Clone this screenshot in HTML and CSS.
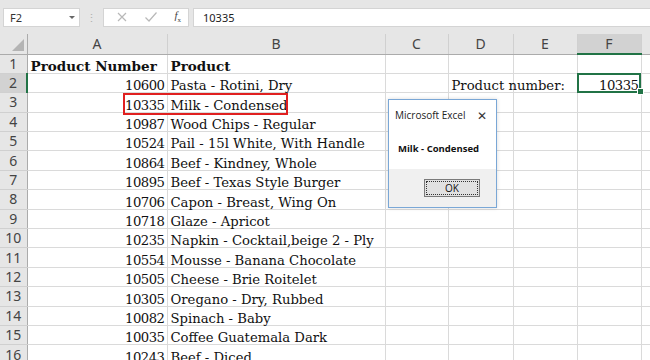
FILE: index.html
```html
<!DOCTYPE html>
<html lang="en">
<head>
    <meta charset="UTF-8">
    <title>Excel - Product lookup</title>
    <link rel="stylesheet" href="styles.css">
</head>
<body>
    <div class="toolbar">
        <div class="name-box">
            <span>F2</span>
            <span class="caret"></span>
        </div>
        <div class="grip">⋮</div>
        <div class="fx-buttons">
            <svg width="12" height="12" viewBox="0 0 12 12"><path d="M2 2 L10 10 M10 2 L2 10" stroke="#b8b8b8" stroke-width="1.2" fill="none"/></svg>
            <svg width="14" height="12" viewBox="0 0 14 12"><path d="M1.5 6.5 L5 10 L12.5 1.5" stroke="#b8b8b8" stroke-width="1.2" fill="none"/></svg>
            <span class="fx"><i>f</i><sub>x</sub></span>
        </div>
        <div class="formula">10335</div>
    </div>

    <div class="sheet">
        <table class="grid">
            <colgroup>
                <col class="c-rh">
                <col class="c-a">
                <col class="c-b">
                <col class="c-c">
                <col class="c-d">
                <col class="c-e">
                <col class="c-f">
                <col>
            </colgroup>
            <tr class="col-heads">
                <th class="corner"><span class="tri"></span></th>
                <th>A</th><th>B</th><th>C</th><th>D</th><th>E</th><th class="active">F</th><th></th>
            </tr>
            <tr><th>1</th><td class="num bold">Product Number</td><td class="bold">Product</td><td></td><td></td><td></td><td></td><td></td></tr>
            <tr><th class="active">2</th><td class="num">10600</td><td>Pasta - Rotini, Dry</td><td></td><td class="label">Product number:</td><td></td><td class="num selected">10335<span class="handle"></span></td><td></td></tr>
            <tr><th>3</th><td class="num">10335</td><td>Milk - Condensed</td><td></td><td></td><td></td><td></td><td></td></tr>
            <tr><th>4</th><td class="num">10987</td><td>Wood Chips - Regular</td><td></td><td></td><td></td><td></td><td></td></tr>
            <tr><th>5</th><td class="num">10524</td><td>Pail - 15l White, With Handle</td><td></td><td></td><td></td><td></td><td></td></tr>
            <tr><th>6</th><td class="num">10864</td><td>Beef - Kindney, Whole</td><td></td><td></td><td></td><td></td><td></td></tr>
            <tr><th>7</th><td class="num">10895</td><td>Beef - Texas Style Burger</td><td></td><td></td><td></td><td></td><td></td></tr>
            <tr><th>8</th><td class="num">10706</td><td>Capon - Breast, Wing On</td><td></td><td></td><td></td><td></td><td></td></tr>
            <tr><th>9</th><td class="num">10718</td><td>Glaze - Apricot</td><td></td><td></td><td></td><td></td><td></td></tr>
            <tr><th>10</th><td class="num">10235</td><td>Napkin - Cocktail,beige 2 - Ply</td><td></td><td></td><td></td><td></td><td></td></tr>
            <tr><th>11</th><td class="num">10554</td><td>Mousse - Banana Chocolate</td><td></td><td></td><td></td><td></td><td></td></tr>
            <tr><th>12</th><td class="num">10505</td><td>Cheese - Brie Roitelet</td><td></td><td></td><td></td><td></td><td></td></tr>
            <tr><th>13</th><td class="num">10305</td><td>Oregano - Dry, Rubbed</td><td></td><td></td><td></td><td></td><td></td></tr>
            <tr><th>14</th><td class="num">10082</td><td>Spinach - Baby</td><td></td><td></td><td></td><td></td><td></td></tr>
            <tr><th>15</th><td class="num">10035</td><td>Coffee Guatemala Dark</td><td></td><td></td><td></td><td></td><td></td></tr>
            <tr><th>16</th><td class="num">10243</td><td>Beef - Diced</td><td></td><td></td><td></td><td></td><td></td></tr>
        </table>

        <!-- highlight drawn over A3:B3 -->
        <div class="found-box"></div>

        <div class="msgbox">
            <div class="msg-title">
                <span>Microsoft Excel</span>
                <span class="msg-close">✕</span>
            </div>
            <div class="msg-body">Milk - Condensed</div>
            <div class="msg-foot">
                <button class="ok">OK</button>
            </div>
        </div>
    </div>
</body>
</html>
```

FILE: styles.css
```css
body {
    margin: 0;
    width: 650px;
    height: 360px;
    overflow: hidden;
    background-color: #fff;
    font-family: "Noto Sans", "Open Sans", sans-serif;
}

.toolbar {
    height: 34px;
    background-color: #e6e6e6;
    display: flex;
    align-items: center;
    padding-left: 3px;
    box-sizing: border-box;
}

.name-box {
    width: 77px;
    height: 19px;
    background-color: #fff;
    border: 1px solid #d4d4d4;
    box-sizing: border-box;
    display: flex;
    align-items: center;
    justify-content: space-between;
    padding: 0 4px 0 6px;
    font-size: 11px;
    color: #333;
}

.caret {
    width: 0;
    height: 0;
    border-left: 3px solid transparent;
    border-right: 3px solid transparent;
    border-top: 3px solid #666;
}

.grip {
    width: 23px;
    text-align: center;
    color: #b0b0b0;
    font-size: 11px;
}

.fx-buttons {
    width: 86px;
    height: 19px;
    background-color: #fff;
    border: 1px solid #d4d4d4;
    box-sizing: border-box;
    display: flex;
    align-items: center;
    justify-content: space-between;
    padding: 0 7px 0 12px;
}

.fx {
    font-family: "Liberation Serif", serif;
    font-size: 11px;
    color: #444;
}

.fx sub {
    font-size: 7px;
}

.formula {
    flex: 1;
    height: 19px;
    margin-left: 4px;
    background-color: #fff;
    border: 1px solid #d4d4d4;
    border-right: none;
    box-sizing: border-box;
    font-size: 11px;
    line-height: 17px;
    padding-left: 9px;
    color: #222;
}

.sheet {
    position: relative;
}

.grid {
    border-collapse: collapse;
    table-layout: fixed;
    width: 660px;
}

.c-rh { width: 27px; }
.c-a { width: 140px; }
.c-b { width: 218px; }
.c-c { width: 63px; }
.c-d { width: 65px; }
.c-e { width: 64px; }
.c-f { width: 64px; }

.grid tr {
    height: 19.4px;
}

.grid tr.col-heads {
    height: 20px;
}

.grid th {
    background-color: #e6e6e6;
    border: 1px solid #d0d0d0;
    font-weight: normal;
    font-size: 14px;
    color: #444;
    padding: 0;
    line-height: 16px;
}

.grid .col-heads th {
    border-top: none;
    border-bottom: 1px solid #ababab;
    border-left: 1px solid #d0d0d0;
}

.grid tr th:first-child {
    border-left: none;
    border-right: 1px solid #ababab;
}

.grid th.active {
    background-color: #d2d2d2;
}

.col-heads th.active {
    border-bottom: 2px solid #217346;
}

.grid tr th.active:first-child {
    border-right: 2px solid #217346;
}

.corner {
    position: relative;
}

.tri {
    position: absolute;
    right: 3px;
    bottom: 3px;
    width: 0;
    height: 0;
    border-left: 12px solid transparent;
    border-bottom: 12px solid #b4b4b4;
}

.grid td {
    border: 1px solid #dadada;
    padding: 0 3px;
    font-family: "DejaVu Serif", "Liberation Serif", serif;
    font-size: 13.2px;
    color: #111;
    white-space: nowrap;
    overflow: visible;
    vertical-align: bottom;
    line-height: 13px;
}

.grid td.num {
    text-align: right;
    letter-spacing: -0.5px;
    padding-right: 2px;
}

.grid td.bold {
    font-weight: bold;
    font-size: 13.5px;
    letter-spacing: 0;
    text-align: left;
}

.grid td.selected {
    position: relative;
    outline: 2px solid #217346;
    outline-offset: -2px;
}

.handle {
    position: absolute;
    right: -3px;
    bottom: -3px;
    width: 5px;
    height: 5px;
    background-color: #217346;
    border: 1px solid #fff;
}

.found-box {
    position: absolute;
    left: 123px;
    top: 59px;
    width: 161px;
    height: 18px;
    border: 2px solid #e02020;
}

.msgbox {
    position: absolute;
    left: 388px;
    top: 65px;
    width: 107px;
    height: 107px;
    background-color: #fff;
    border: 1px solid #7aa7d6;
    box-shadow: 0 0 4px rgba(0, 0, 0, 0.15);
    display: flex;
    flex-direction: column;
    font-family: "Open Sans", "Noto Sans", sans-serif;
}

.msg-title {
    height: 30px;
    display: flex;
    align-items: center;
    justify-content: space-between;
    padding: 0 9px 0 6px;
    font-size: 10px;
    color: #222;
}

.msg-close {
    font-size: 12px;
    color: #333;
}

.msg-body {
    flex: 1;
    padding: 12px 0 0 9px;
    font-size: 9.5px;
    font-weight: bold;
    color: #111;
}

.msg-foot {
    height: 38px;
    background-color: #f0f0f0;
    display: flex;
    align-items: center;
    justify-content: flex-end;
    padding-right: 16px;
}

.ok {
    width: 56px;
    height: 18px;
    background-color: #e1e1e1;
    border: 1px solid #7a7a7a;
    outline: 1px dotted #333;
    outline-offset: -3px;
    font-family: "Open Sans", "Noto Sans", sans-serif;
    font-size: 10px;
    color: #111;
    padding: 0;
}
```
